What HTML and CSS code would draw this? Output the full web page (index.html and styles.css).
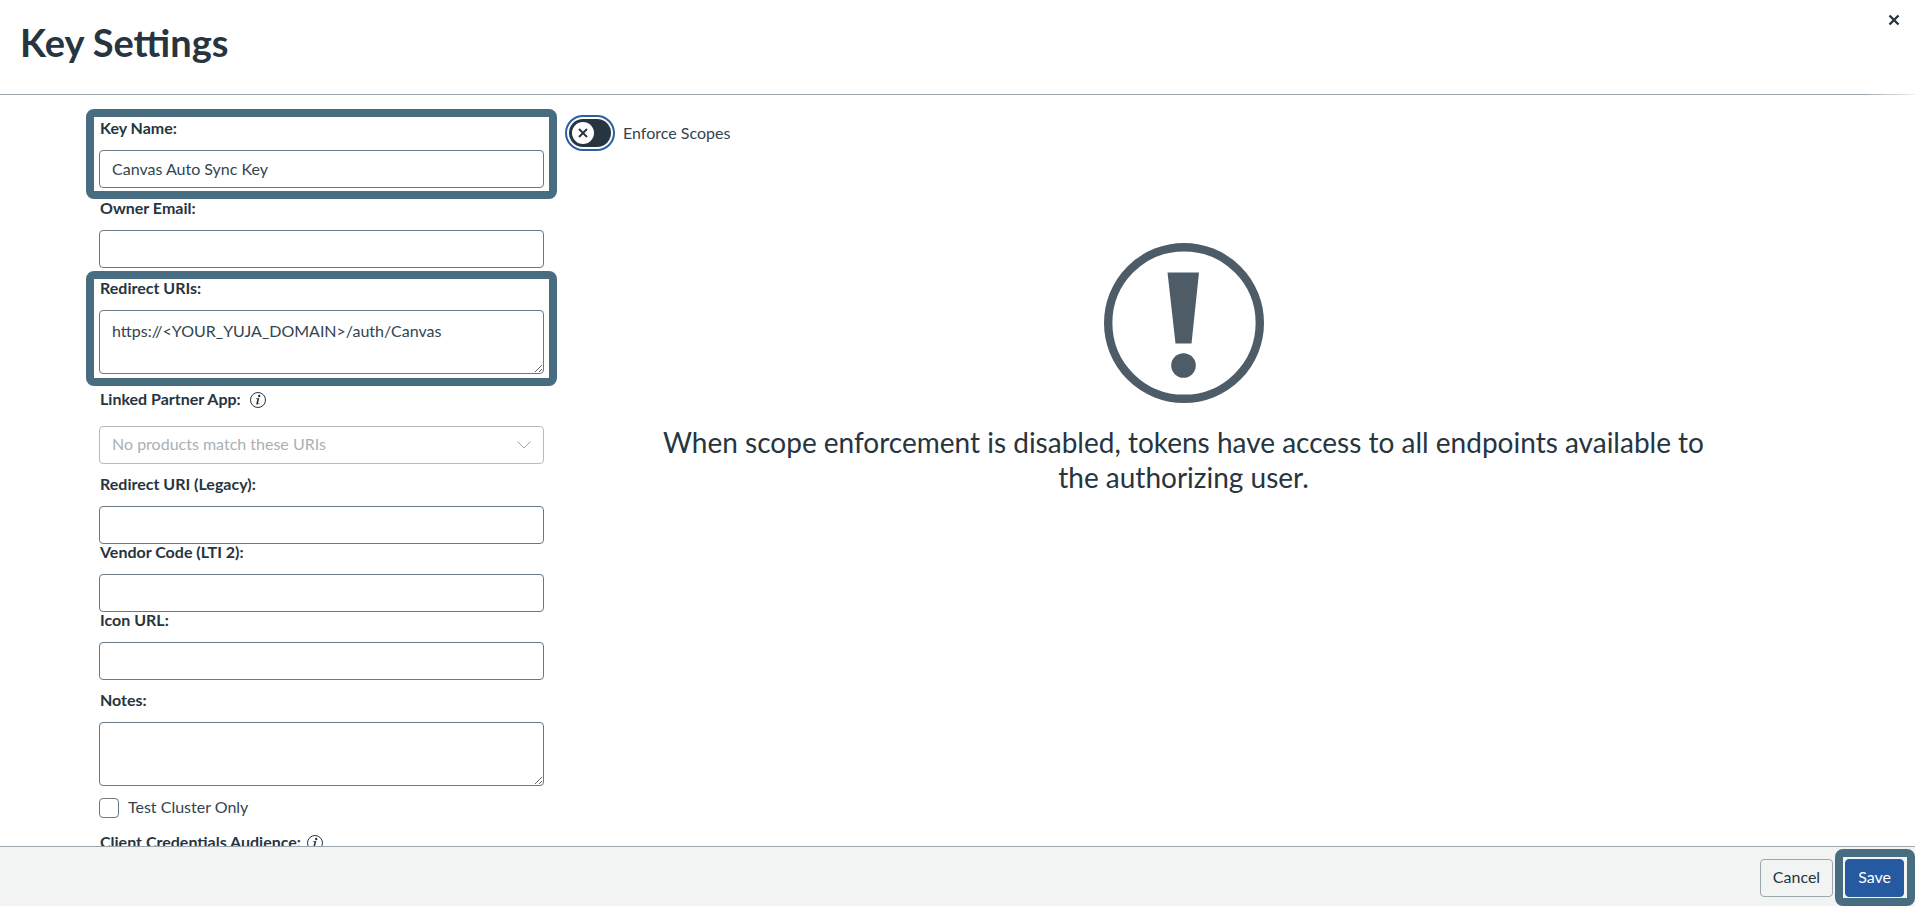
FILE: index.html
```html
<!DOCTYPE html>
<html lang="en">
<head>
<meta charset="utf-8">
<title>Key Settings</title>
<link rel="stylesheet" href="styles.css">
</head>
<body>
<div class="modal">
  <header class="modal-header">
    <h1 class="title">Key Settings</h1>
    <button class="close" type="button" aria-label="Close">
      <svg viewBox="0 0 12 12" width="12" height="12"><path d="M1.500 1.500l9 9M10.500 1.500l-9 9" stroke="currentColor" stroke-width="2.400" fill="none"/></svg>
    </button>
  </header>
  <main class="modal-body">
    <form class="form" id="key-form">
      <div class="fields">
        <div class="field marked">
          <label class="label" for="name">Key Name:</label>
          <input class="control" id="name" type="text" value="Canvas Auto Sync Key">
        </div>
        <div class="field spaced">
          <label class="label" for="email">Owner Email:</label>
          <input class="control" id="email" type="text">
        </div>
        <div class="field spaced marked marked-low">
          <label class="label" for="uris">Redirect URIs:</label>
          <textarea class="control area" id="uris" spellcheck="false">https://&lt;YOUR_YUJA_DOMAIN&gt;/auth/Canvas</textarea>
        </div>
        <div class="field field-app">
          <div class="label-row">
            <label class="label" for="app">Linked Partner App:</label>
            <button class="info" type="button" aria-label="About linked partner apps">
              <svg viewBox="0 0 16 16" width="16" height="16"><circle cx="8" cy="8" r="7.500" fill="none" stroke="currentColor"/><circle cx="9.200" cy="4" r="1.200" fill="currentColor"/><path d="M6 6.400l3.400-.4-1.400 5.300c-.1.500.4.400 1.300-.4l.3.400c-1.200 1.300-3.700 2-3.300.2L7.400 7.300 6 6.900z" fill="currentColor"/></svg>
            </button>
          </div>
          <div class="select-wrap">
            <select class="control select" id="app" disabled><option>No products match these URIs</option></select>
            <svg class="chevron" viewBox="0 0 14 8" width="14" height="8"><path d="M.5.5L7 7l6.500-6.500" fill="none" stroke="currentColor"/></svg>
          </div>
        </div>
        <div class="field spaced">
          <label class="label" for="legacy">Redirect URI (Legacy):</label>
          <input class="control" id="legacy" type="text">
        </div>
        <div class="field">
          <label class="label" for="vendor">Vendor Code (LTI 2):</label>
          <input class="control" id="vendor" type="text">
        </div>
        <div class="field">
          <label class="label" for="icon">Icon URL:</label>
          <input class="control" id="icon" type="text">
        </div>
        <div class="field spaced">
          <label class="label" for="notes">Notes:</label>
          <textarea class="control area" id="notes"></textarea>
        </div>
        <div class="check-row spaced">
          <input class="check" id="test-cluster" type="checkbox">
          <label class="check-label" for="test-cluster">Test Cluster Only</label>
        </div>
        <div class="label-row audience">
          <span class="label">Client Credentials Audience:</span>
          <button class="info" type="button" aria-label="About the audience">
            <svg viewBox="0 0 16 16" width="16" height="16"><circle cx="8" cy="8" r="7.500" fill="none" stroke="currentColor"/><circle cx="9.200" cy="4" r="1.200" fill="currentColor"/><path d="M6 6.400l3.400-.4-1.400 5.300c-.1.500.4.400 1.300-.4l.3.400c-1.200 1.300-3.700 2-3.300.2L7.400 7.300 6 6.900z" fill="currentColor"/></svg>
          </button>
        </div>
      </div>
      <section class="scopes">
        <div class="toggle-row">
          <span class="toggle-box">
            <input class="toggle" id="enforce" type="checkbox" role="switch">
            <svg class="knob" viewBox="0 0 22 22" width="22" height="22"><circle cx="11" cy="11" r="11" fill="#fff"/><path d="M7 7l8 8M15 7l-8 8" stroke="#273540" stroke-width="1.900"/></svg>
          </span>
          <label for="enforce">Enforce Scopes</label>
        </div>
        <svg class="alert" viewBox="0 0 160 160" width="160" height="160"><circle cx="80" cy="80" r="75.800" fill="none" stroke="#4e5c68" stroke-width="8.400"/><path d="M63.500 29.500h31.500L87.500 100.500H71.500z" fill="#4e5c68"/><circle cx="79.500" cy="122.500" r="12.300" fill="#4e5c68"/></svg>
        <p class="message">When scope enforcement is disabled, tokens have access to all endpoints available to the authorizing user.</p>
      </section>
    </form>
  </main>
  <footer class="modal-footer">
    <button class="btn" type="button">Cancel</button>
    <span class="save-box"><button class="btn primary" type="submit" form="key-form">Save</button></span>
  </footer>
</div>
</body>
</html>
```

FILE: styles.css
```css
* { box-sizing: border-box; }

body {
  margin: 0;
  background: #fff;
  color: #273540;
  font: 16px/20px Lato, sans-serif;
}

button, input, select, textarea { font: inherit; color: inherit; }

.modal {
  display: flex;
  flex-direction: column;
  height: 100vh;
  overflow: hidden;
}

.modal-header {
  display: flex;
  justify-content: space-between;
  align-items: flex-start;
  padding: 14px 15px 27px 20px;
  background: linear-gradient(to right, #9ea6ad calc(100% - 50px), #eceef0) bottom / 100% 1px no-repeat;
}

.title { margin: 0; padding: 4px 0 2px; font-size: 38px; line-height: 48px; font-weight: 700; }

.close {
  display: flex;
  padding: 0;
  border: 0;
  background: none;
}

.modal-body {
  flex: 1;
  min-height: 0;
  overflow: hidden;
  padding: 24px 95px 0 99px;
}

.form { display: grid; grid-template-columns: 445fr 1273fr; gap: 3px; }

.fields { display: flex; flex-direction: column; padding-top: 1px; }

.field { display: flex; flex-direction: column; gap: 14px; position: relative; }
.spaced { margin-top: 12px; }
.field-app { margin-top: 16px; gap: 18px; }

.label { padding-left: 1px; font-weight: 700; line-height: 16px; }

.label-row { display: flex; align-items: center; gap: 9px; height: 18px; }
.audience { margin-top: 15px; gap: 6px; }

.info { display: flex; padding: 1px 0 0; border: 0; background: none; }

.control {
  display: block;
  width: 100%;
  height: 38px;
  margin: 0;
  padding: 0 12px 2px;
  border: 1px solid #6a7883;
  border-radius: 4px;
  background: #fff;
  color: #334451;
}

.area { height: 64px; padding: 10px 12px; resize: vertical; overflow: hidden; }

.select-wrap { position: relative; color: #9ea6ad; }
.select { appearance: none; border-color: #b5bbc0; color: #aab0b5; opacity: 1; }
.chevron { position: absolute; right: 13px; top: 15px; }

.marked::after {
  content: "";
  position: absolute;
  inset: -11px -13px;
  border: 8px solid #486d80;
  border-radius: 8px;
  pointer-events: none;
}
.marked-low::after { inset: -9px -13px -12px; }

.check-row { display: flex; align-items: center; gap: 9px; color: #334451; }
.check-label { padding-bottom: 2px; line-height: 18px; }

.check {
  appearance: none;
  width: 20px;
  height: 20px;
  margin: 0;
  border: 1px solid #6a7883;
  border-radius: 4px;
}

.scopes { display: flex; flex-direction: column; align-items: center; }

.toggle-row {
  align-self: flex-start;
  display: flex;
  align-items: center;
  gap: 12px;
  margin: 0 0 96px 22px;
  color: #334451;
}

.toggle-box { position: relative; display: flex; }

.toggle {
  appearance: none;
  width: 42px;
  height: 28px;
  margin: 0;
  border-radius: 14px;
  background: #273540;
  outline: 2px solid #2b5fa4;
  outline-offset: 2px;
}

.knob { position: absolute; left: 3px; top: 3px; pointer-events: none; }

.message {
  margin: 22px 0 0;
  padding: 0 100px;
  font-size: 28px;
  line-height: 35px;
  text-align: center;
}

.modal-footer {
  display: flex;
  justify-content: flex-end;
  align-items: center;
  gap: 12px;
  height: 60px;
  padding: 2px 11px 0 20px;
  border-top: 1px solid #9ea6ad;
  background: #f2f4f4;
}

.btn {
  height: 38px;
  padding: 0 12px 2px;
  border: 1px solid #9ea6ad;
  border-radius: 4px;
  background: #f2f4f4;
}

.primary { border-color: #2a5a97; background: #2559a0; color: #fff; }

.save-box { position: relative; display: flex; }
.save-box::after {
  content: "";
  position: absolute;
  inset: -10px -11px -9px -10px;
  border: 8px solid #486d80;
  border-radius: 8px;
  pointer-events: none;
}
```
